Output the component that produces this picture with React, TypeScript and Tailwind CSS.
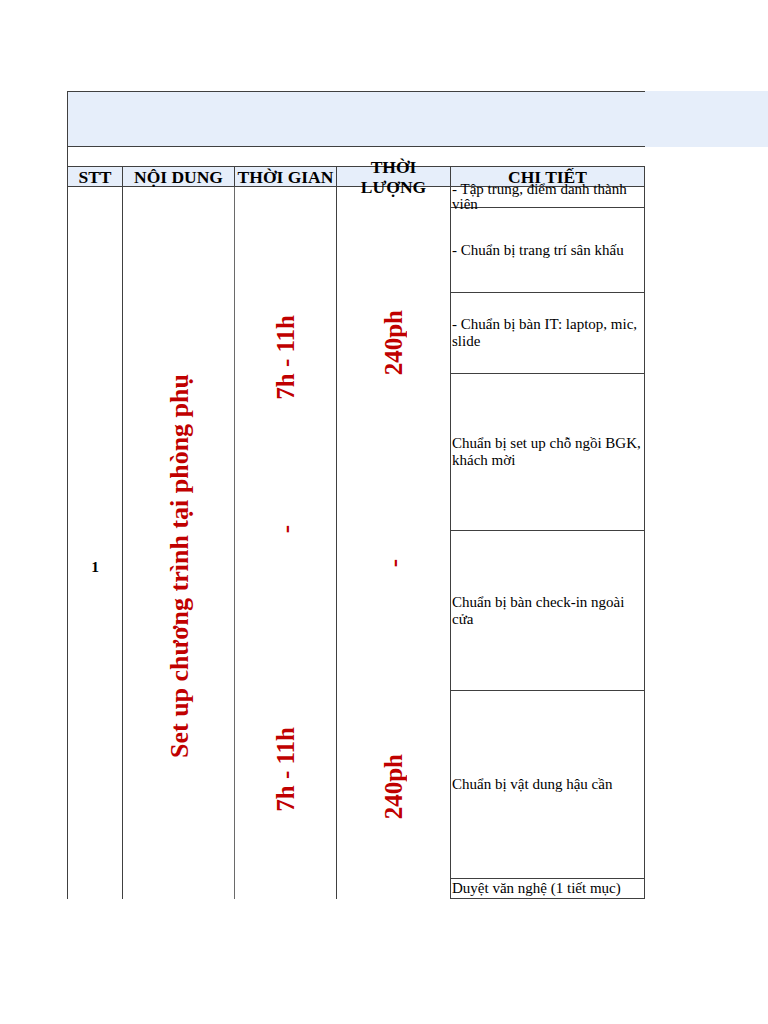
export default function App() {
  const line = "border-[#404040]";
  const vt = "[writing-mode:vertical-rl] rotate-180 leading-none whitespace-nowrap font-bold text-[#c00000]";
  const rows: { h: string; text: string; lh: string }[] = [
    { h: "h-[21px]", text: "- Tập trung, điểm danh thành viên", lh: "leading-[15px]" },
    { h: "h-[85px]", text: "- Chuẩn bị trang trí sân khấu", lh: "leading-[17px]" },
    { h: "h-[81px]", text: "- Chuẩn bị bàn IT: laptop, mic, slide", lh: "leading-[17px]" },
    { h: "h-[157px]", text: "Chuẩn bị set up chỗ ngồi BGK, khách mời", lh: "leading-[17px]" },
    { h: "h-[160px]", text: "Chuẩn bị bàn check-in ngoài cửa", lh: "leading-[17px]" },
    { h: "h-[188px]", text: "Chuẩn bị vật dung hậu cần", lh: "leading-[17px]" },
    { h: "h-[20px]", text: "Duyệt văn nghệ (1 tiết mục)", lh: "leading-[17px]" },
  ];
  return (
    <div className="w-[768px] h-[1024px] bg-white font-['Liberation_Serif',serif] text-black pt-[91px]">
      {/* banner */}
      <div className="flex h-[56px]">
        <div className="w-[67px] shrink-0" />
        <div className={`w-[578px] shrink-0 border-y border-l ${line} bg-[#e6eefa]`} />
        <div className="flex-1 bg-[#e6eefa]" />
      </div>
      <div className={`ml-[67px] h-[19px] w-[578px] border-l ${line}`} />
      {/* header */}
      <div
        className={`ml-[67px] flex h-[21px] w-[578px] border-y border-l ${line} bg-[#e6eefa] text-[17.5px] font-bold leading-[20px]`}
      >
        <div className={`w-[55px] shrink-0 border-r ${line} flex items-center justify-center`}>STT</div>
        <div className={`w-[112px] shrink-0 border-r ${line} flex items-center justify-center whitespace-nowrap`}>NỘI DUNG</div>
        <div className={`w-[102px] shrink-0 border-r ${line} flex items-center justify-center whitespace-nowrap`}>THỜI GIAN</div>
        <div className={`w-[114px] shrink-0 border-r ${line} flex items-center justify-center text-center`}>
          <span>
            THỜI
            <br />
            LƯỢNG
          </span>
        </div>
        <div className={`w-[194px] shrink-0 border-r ${line} flex items-center justify-center`}>CHI TIẾT</div>
      </div>
      {/* body */}
      <div className={`ml-[67px] flex h-[712px] w-[578px] border-l ${line}`}>
        <div className={`w-[55px] shrink-0 border-r ${line} flex items-center justify-center pt-[47px] text-[15.5px] font-bold`}>
          1
        </div>
        <div className={`w-[112px] shrink-0 border-r border-[#6a6a6a] flex items-center justify-center pt-[47px] pl-[3px]`}>
          <span className={`${vt} text-[26px]`}>Set up chương trình tại phòng phụ</span>
        </div>
        <div className={`w-[102px] shrink-0 border-r ${line} flex flex-col items-center`}>
          <span className={`${vt} text-[25px] mt-[128px]`}>7h - 11h</span>
          <span className={`${vt} text-[25px] mt-[125px]`}>-</span>
          <span className={`${vt} text-[25px] mt-[194px]`}>7h - 11h</span>
        </div>
        <div className={`w-[114px] shrink-0 border-r ${line} flex flex-col items-center`}>
          <span className={`${vt} text-[25px] mt-[123px]`}>240ph</span>
          <span className={`${vt} text-[25px] mt-[184px]`}>-</span>
          <span className={`${vt} text-[25px] mt-[186px]`}>240ph</span>
        </div>
        <div className={`w-[194px] shrink-0 border-r ${line} flex flex-col text-[15px]`}>
          {rows.map((r, i) => (
            <div key={i} className={`${r.h} shrink-0 border-b ${line} flex items-center pl-[1px] ${r.lh}`}>
              <span>{r.text}</span>
            </div>
          ))}
        </div>
      </div>
    </div>
  );
}
